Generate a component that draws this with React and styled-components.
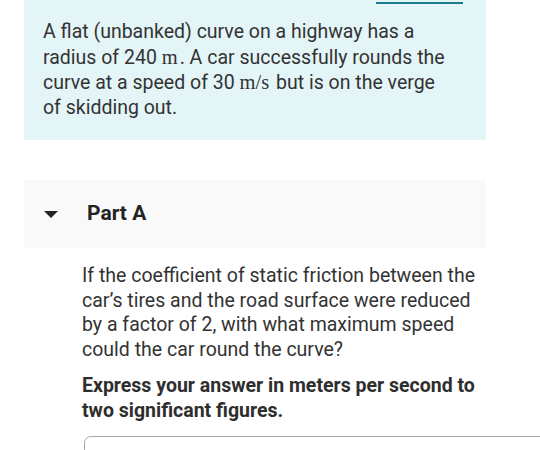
import styled, { createGlobalStyle } from "styled-components";

const GlobalStyle = createGlobalStyle`
  body {
    margin: 0;
    background: #fff;
    font-family: Roboto, "Noto Sans", sans-serif;
    color: #333;
  }
`;

const Page = styled.div`
  width: 540px;
  height: 450px;
  overflow: hidden;
  padding-left: 24px;
  box-sizing: border-box;
`;

const InfoBox = styled.section`
  width: 462px;
  background: #e4f5f7;
  padding: 20px 30px 20px 19px;
  box-sizing: border-box;
  position: relative;
`;

const Link = styled.a`
  position: absolute;
  top: -20px;
  right: 23px;
  display: inline-block;
  color: #1b7b8c;
  font-size: 19px;
  line-height: 22px;
  border-bottom: 2px solid #1b7b8c;
`;

const Text = styled.p`
  margin: 0;
  font-size: 19.5px;
  line-height: 24.5px;
  color: ${(p) => (p.$strong ? "#2e2e2e" : "#333")};
  font-weight: ${(p) => (p.$strong ? 700 : 400)};
`;

const Math = styled.span`
  font-family: "Liberation Serif", "DejaVu Serif", serif;
  font-size: 20.5px;
  margin-right: 2px;
`;

const PartHeader = styled.div`
  width: 462px;
  height: 68px;
  margin-top: 40px;
  background: #f9f9f9;
  display: flex;
  align-items: center;
  padding-left: 20px;
  box-sizing: border-box;
  gap: 29px;
`;

const Caret = styled.span`
  width: 0;
  height: 0;
  border-left: 7px solid transparent;
  border-right: 7px solid transparent;
  border-top: 7px solid #222;
`;

const PartTitle = styled.h2`
  margin: 0 0 2px;
  font-size: 21px;
  font-weight: 700;
  color: #222;
`;

const PartBody = styled.div`
  padding: 16px 0 0 58px;
  display: flex;
  flex-direction: column;
  gap: 12px;
  width: 402px;
`;

const AnswerBox = styled.div`
  margin: 1px 0 0 2px;
  width: 480px;
  height: 40px;
  flex-shrink: 0;
  border: 1.5px solid #a9a9a9;
  border-radius: 7px;
`;

export default function App() {
  return (
    <>
      <GlobalStyle />
      <Page>
        <InfoBox>
          <Link>Constants</Link>
          <Text>
            A flat (unbanked) curve on a highway has a radius of 240{" "}
            <Math>m</Math>. A car successfully rounds the curve at a speed of
            30 <Math>m/s</Math> but is on the verge of skidding out.
          </Text>
        </InfoBox>
        <PartHeader>
          <Caret />
          <PartTitle>Part A</PartTitle>
        </PartHeader>
        <PartBody>
          <Text>
            If the coefficient of static friction between the car’s tires and
            the road surface were reduced by a factor of 2, with what maximum
            speed could the car round the curve?
          </Text>
          <Text $strong>
            Express your answer in meters per second to two significant
            figures.
          </Text>
          <AnswerBox />
        </PartBody>
      </Page>
    </>
  );
}
